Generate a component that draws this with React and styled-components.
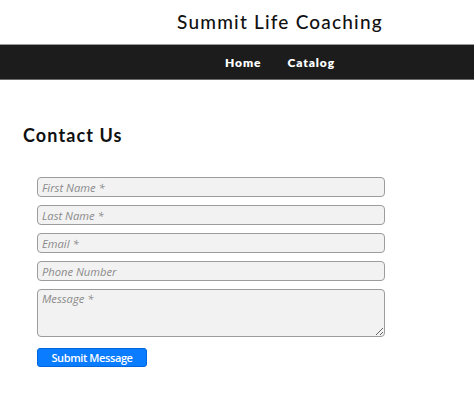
import React from 'react';
import styled, { createGlobalStyle } from 'styled-components';

const GlobalStyle = createGlobalStyle`
  html, body {
    margin: 0;
    padding: 0;
    background: #fff;
  }
  body {
    font-family: "Open Sans", "Liberation Sans", sans-serif;
    color: #111;
  }
`;

const Header = styled.header`
  display: flex;
  justify-content: center;
  padding: 10px 0 0 86px;
  height: 34px;
  box-sizing: border-box;
`;

const SiteTitle = styled.h1`
  margin: 0;
  font-family: "Lato", "Liberation Sans", sans-serif;
  font-size: 19px;
  font-weight: 500;
  letter-spacing: 1.2px;
  color: #111;
  line-height: 24px;
`;

const NavBar = styled.nav`
  display: flex;
  justify-content: center;
  align-items: center;
  gap: 26px;
  height: 36px;
  margin-top: 10px;
  padding-left: 86px;
  background: #1c1c1c;
  border-top: 1px solid #9a9a9a;
  border-bottom: 1px solid #6a6a6a;
  box-sizing: border-box;
`;

const NavLink = styled.a`
  font-family: "Lato", "Liberation Sans", sans-serif;
  font-weight: 800;
  font-size: 12px;
  letter-spacing: 0.9px;
  color: #fff;
  text-decoration: none;
`;

const Main = styled.main`
  padding: 43px 23px 0;
`;

const Heading = styled.h2`
  margin: 0;
  font-family: "Lato", "Liberation Sans", sans-serif;
  font-size: 18px;
  font-weight: 700;
  letter-spacing: 1.1px;
  line-height: 24px;
  color: #111;
`;

const Form = styled.form`
  display: flex;
  flex-direction: column;
  align-items: flex-start;
  gap: 8px;
  margin: 30px 0 0 14px;
  width: 348px;
`;

const fieldStyles = `
  width: 100%;
  box-sizing: border-box;
  background: #f2f2f2;
  border: 1px solid #9c9c9c;
  border-radius: 4px;
  padding: 0 4px;
  font-family: "Open Sans", "Liberation Sans", sans-serif;
  font-size: 11.2px;
  color: #222;
  margin: 0;

  &::placeholder {
    color: #8a8a8a;
    font-style: italic;
  }
`;

const Input = styled.input`
  ${fieldStyles}
  height: 20px;
`;

const TextArea = styled.textarea`
  ${fieldStyles}
  height: 48px;
  padding-top: 1px;
  resize: vertical;
  display: block;
`;

const SubmitButton = styled.button`
  margin-top: 3px;
  height: 19px;
  width: 110px;
  padding: 0;
  background: #0a7cff;
  border: 1px solid #0066dd;
  border-radius: 3px;
  color: #fff;
  font-family: "Open Sans", "Liberation Sans", sans-serif;
  font-weight: 600;
  font-size: 11px;
  letter-spacing: -0.4px;
  line-height: 17px;
  cursor: pointer;
`;

const fields = ['First Name *', 'Last Name *', 'Email *', 'Phone Number'];

const App = () => {
  return (
    <>
      <GlobalStyle />
      <Header>
        <SiteTitle>Summit Life Coaching</SiteTitle>
      </Header>
      <NavBar>
        <NavLink href="#">Home</NavLink>
        <NavLink href="#">Catalog</NavLink>
      </NavBar>
      <Main>
        <Heading>Contact Us</Heading>
        <Form onSubmit={(e) => e.preventDefault()}>
          {fields.map((f) => (
            <Input key={f} placeholder={f} />
          ))}
          <TextArea placeholder="Message *" />
          <SubmitButton type="submit">Submit Message</SubmitButton>
        </Form>
      </Main>
    </>
  );
};

export default App;
